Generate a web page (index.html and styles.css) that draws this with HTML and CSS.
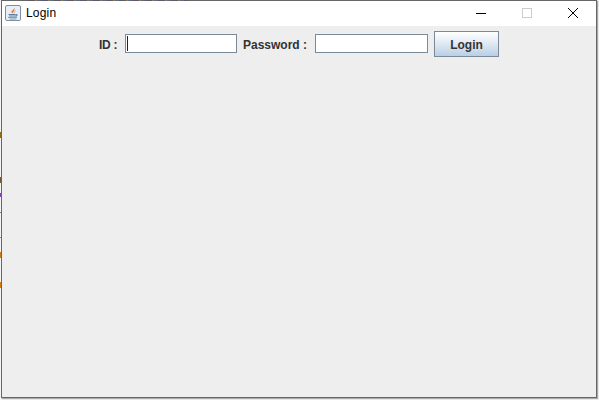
FILE: index.html
```html
<!DOCTYPE html>
<html lang="en">
<head>
    <meta charset="UTF-8">
    <title>Login</title>
    <link rel="stylesheet" href="styles.css">
</head>
<body>
    <div class="edge-left"></div>
    <div class="edge-top"></div>
    <div class="window">
        <div class="titlebar">
            <svg class="app-icon" width="16" height="16" viewBox="0 0 16 16">
                <rect x="0.5" y="0.5" width="15" height="15" rx="1.5" fill="#e8eef5" stroke="#7c8fa3"/>
                <path d="M9.500 2.500C10 4 7 5 6.500 6.500c-.3 1 .3 1.500 1 2C7.500 7 10.500 5.500 9.500 2.500z" fill="#e2782e"/>
                <path d="M10.500 5.500c-.5 1-1.500 1.500-1.500 3" fill="none" stroke="#e9a060" stroke-width="1"/>
                <path d="M3.500 9.500h7M4 11h6" stroke="#5b7ea6" stroke-width="1"/>
                <path d="M10.500 9.500h1.500v1.500h-2" fill="none" stroke="#5b7ea6" stroke-width="1"/>
                <path d="M3 12.500h9M4.500 14h7" stroke="#7f9cbd" stroke-width="1"/>
            </svg>
            <span class="title">Login</span>
            <div class="controls">
                <span class="control">
                    <svg width="12" height="12" viewBox="0 0 12 12"><path d="M1 6.500h10" stroke="#000" stroke-width="1"/></svg>
                </span>
                <span class="control">
                    <svg width="12" height="12" viewBox="0 0 12 12"><rect x="1.500" y="1.500" width="9" height="9" fill="none" stroke="#cccccc"/></svg>
                </span>
                <span class="control">
                    <svg width="12" height="12" viewBox="0 0 12 12"><path d="M1 1l10 10M11 1L1 11" stroke="#000" stroke-width="1"/></svg>
                </span>
            </div>
        </div>
        <form class="login-form">
            <label class="field-label id-label" for="id">ID :</label>
            <input type="text" id="id" class="field caret">
            <label class="field-label pw-label" for="password">Password :</label>
            <input type="password" id="password" class="field pw-field">
            <button type="button" class="btn">Login</button>
        </form>
    </div>
</body>
</html>
```

FILE: styles.css
```css
* {
    padding: 0;
    margin: 0;
    box-sizing: border-box;
}
html, body {
    width: 599px;
    height: 400px;
    overflow: hidden;
    background-color: #f4f4f4;
}
/* bits of the desktop showing past the window edge */
.edge-left {
    position: absolute;
    left: 0;
    top: 120px;
    width: 1px;
    height: 180px;
    background:
        linear-gradient(#8a6d10, #8a6d10) 0 12px / 1px 6px no-repeat,
        linear-gradient(#7a5a30, #7a5a30) 0 57px / 1px 6px no-repeat,
        linear-gradient(#8a3fc0, #8a3fc0) 0 73px / 1px 4px no-repeat,
        linear-gradient(#7080a0, #7080a0) 0 92px / 1px 1px no-repeat,
        linear-gradient(#a08a50, #a08a50) 0 117px / 1px 1px no-repeat,
        linear-gradient(#d07a10, #d07a10) 0 132px / 1px 6px no-repeat,
        linear-gradient(#d07a10, #d07a10) 0 162px / 1px 6px no-repeat;
}
.edge-top {
    position: absolute;
    left: 28px;
    top: 0;
    width: 160px;
    height: 1px;
    z-index: 1;
    background: repeating-linear-gradient(90deg, #5f5a66 0 7px, #8a7a50 7px 9px, #5c6c84 9px 13px);
}
.window {
    display: flex;
    flex-direction: column;
    width: 596px;
    height: 398px;
    margin-left: 1px;
    background-color: #eeeeee;
    border: 1px solid #666666;
    box-shadow: 1px 1px 1px #aaaaaa;
    font-family: "Liberation Sans", Arial, sans-serif;
}
.titlebar {
    display: flex;
    align-items: center;
    height: 25px;
    padding: 0 0 2px 3px;
    background-color: #ffffff;
}
.app-icon {
    flex: none;
}
.title {
    margin-left: 5px;
    font-size: 12px;
    letter-spacing: 0.2px;
    color: #000000;
}
.controls {
    display: flex;
    margin-left: auto;
}
.control {
    display: flex;
    align-items: center;
    justify-content: center;
    width: 46px;
    height: 23px;
}
.login-form {
    display: flex;
    align-items: flex-start;
    height: 31px;
    padding: 5px 0 0 97px;
}
.field-label {
    height: 26px;
    padding-top: 7px;
    font-size: 12px;
    font-weight: bold;
    color: #333333;
}
.id-label {
    width: 26px;
    letter-spacing: -0.3px;
}
.pw-label {
    width: 72px;
}
.field {
    width: 112px;
    height: 19px;
    margin: 3px 6px 0 0;
    background-color: #ffffff;
    border: 1px solid #7a8a99;
    outline: none;
}
.pw-field {
    width: 113px;
}
.caret {
    background: linear-gradient(#222222, #222222) 1px 1px / 1px 15px no-repeat #ffffff;
}
.btn {
    width: 65px;
    height: 26px;
    padding-top: 2px;
    font-family: inherit;
    font-size: 12px;
    font-weight: bold;
    color: #333333;
    background: linear-gradient(#ffffff, #dbe6f1 55%, #b8cfe5);
    border: 1px solid #7a8a99;
}
```
